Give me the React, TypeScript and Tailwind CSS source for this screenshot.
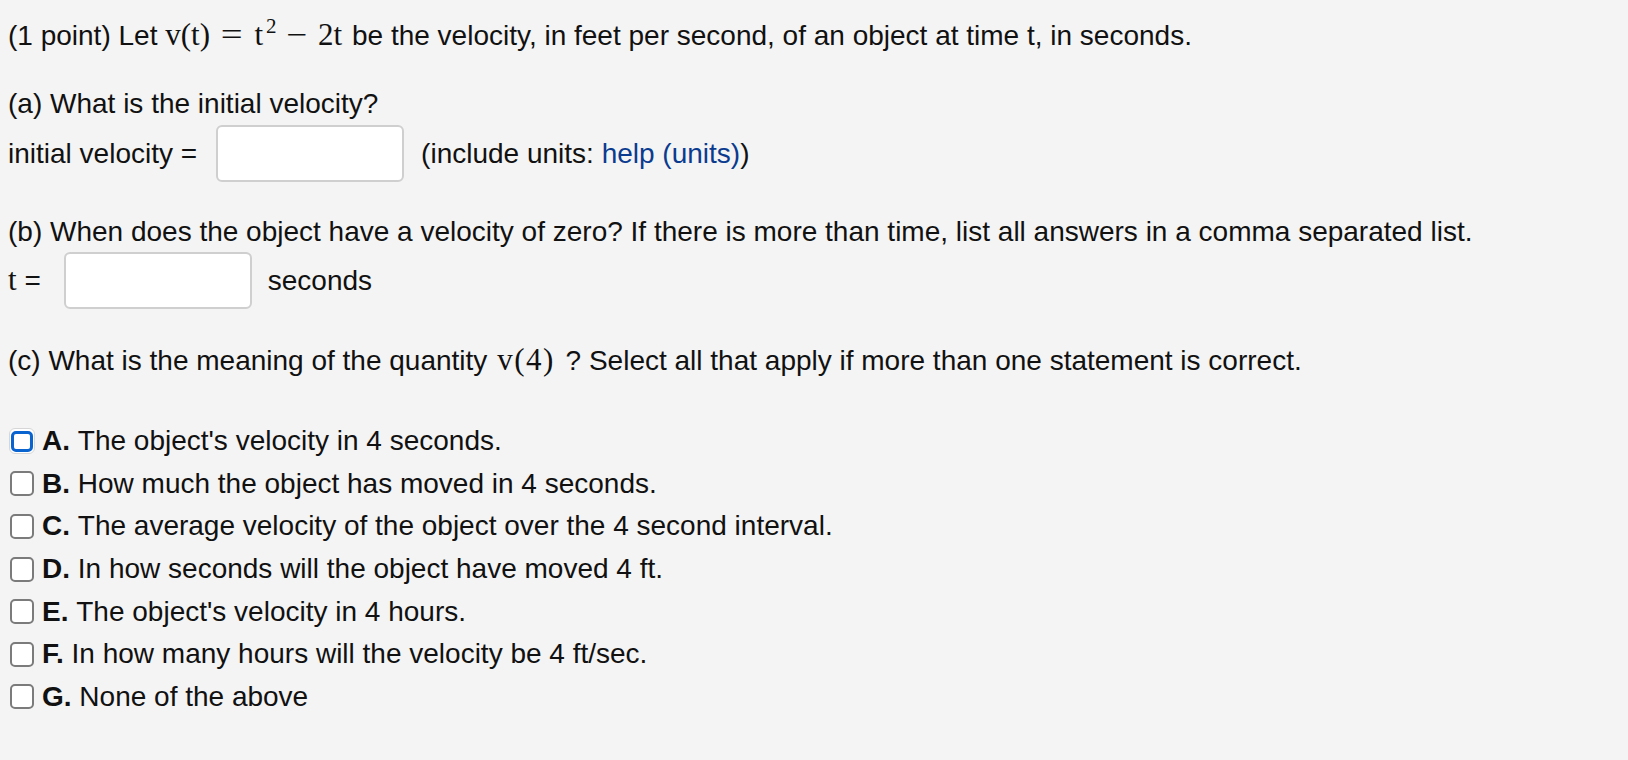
import React from "react";

const sans = { fontFamily: '"Liberation Sans", Arial, Helvetica, sans-serif' };

function M({ children, className = "" }: { children: React.ReactNode; className?: string }) {
  return (
    <span className={"font-['Liberation_Serif',serif] text-[31px] " + className}>{children}</span>
  );
}

function Box({ className = "" }: { className?: string }) {
  return (
    <div
      className={
        "h-[57px] w-[188px] shrink-0 rounded-[6px] border-2 border-[#cfcfcf] bg-white " + className
      }
    />
  );
}

function Check({ focused }: { focused?: boolean }) {
  if (focused) {
    return (
      <div className="flex h-[26px] w-[26px] shrink-0 items-center justify-center rounded-[6px] border border-[#d6d6d6] bg-white">
        <div className="h-[21px] w-[22px] rounded-[5px] border-[3.5px] border-[#0a64d0] bg-white" />
      </div>
    );
  }
  return (
    <div className="ml-[1px] mr-[1px] h-[25px] w-[24px] shrink-0 rounded-[5px] border-2 border-[#7b7b7b] bg-white" />
  );
}

const options: [string, string][] = [
  ["A.", "The object's velocity in 4 seconds."],
  ["B.", "How much the object has moved in 4 seconds."],
  ["C.", "The average velocity of the object over the 4 second interval."],
  ["D.", "In how seconds will the object have moved 4 ft."],
  ["E.", "The object's velocity in 4 hours."],
  ["F.", "In how many hours will the velocity be 4 ft/sec."],
  ["G.", "None of the above"],
];

export default function App() {
  return (
    <div
      className="h-[760px] w-full overflow-hidden bg-[#f4f4f4] pl-[8px] pt-[21px] text-[28px] leading-[30px] text-[#111]"
      style={sans}
    >
      <div className="flex h-[30px] items-center whitespace-nowrap">
        <span>
          (1 point) Let <M>v(t)</M>
          <span className="ml-[13px] mr-[14px] inline-block scale-x-[1.25] font-['Liberation_Serif',serif] text-[31px]">=</span>
          <M>t</M>
          <span className="relative top-[-12px] ml-[3px] font-['Liberation_Serif',serif] text-[21px]">2</span>
          <span className="ml-[11px] mr-[13px] inline-block scale-x-[1.2] font-['Liberation_Serif',serif] text-[31px]">−</span>
          <M>2t</M>
          <span className="ml-[2px]"> be the velocity, in feet per second, of an object at time t, in seconds.</span>
        </span>
      </div>

      <div className="mt-[38px] flex h-[30px] items-center whitespace-nowrap">
        (a) What is the initial velocity?
      </div>

      <div className="mt-[6px] flex h-[57px] items-center whitespace-nowrap">
        <span>initial velocity =</span>
        <Box className="ml-[19px]" />
        <span className="ml-[17px]">
          (include units: <span className="text-[#0b3b8f]">help (units)</span>)
        </span>
      </div>

      <div className="mt-[35px] flex h-[30px] items-center whitespace-nowrap">
        (b) When does the object have a velocity of zero? If there is more than time, list all answers in a comma separated list.
      </div>

      <div className="mt-[5px] flex h-[57px] items-center whitespace-nowrap">
        <span>
          <M>t</M> =
        </span>
        <Box className="ml-[23px]" />
        <span className="ml-[16px]">seconds</span>
      </div>

      <div className="mt-[36px] flex h-[30px] items-center whitespace-nowrap">
        <span>
          (c) What is the meaning of the quantity <M className="ml-[2px] mr-[3px] tracking-[1.5px]">v(4)</M> ? Select all that apply if more than one statement is correct.
        </span>
      </div>

      <div className="mt-[45px] flex flex-col">
        {options.map(([l, t], i) => (
          <div key={l} className="flex h-[42.6px] items-center whitespace-nowrap">
            <div className="ml-[1px] flex w-[33px] shrink-0 items-center">
              <Check focused={i === 0} />
            </div>
            <span className="font-bold">{l}</span>
            <span>&nbsp;{t}</span>
          </div>
        ))}
      </div>
    </div>
  );
}
